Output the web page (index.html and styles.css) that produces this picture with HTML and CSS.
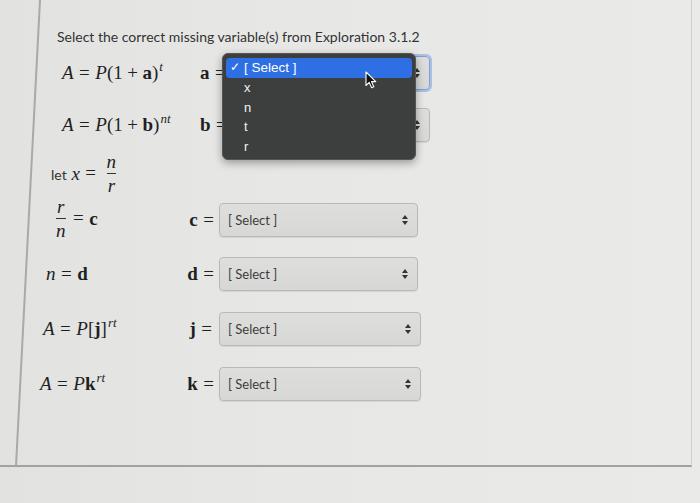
FILE: index.html
```html
<!DOCTYPE html>
<html>
<head>
<meta charset="utf-8">
<link rel="stylesheet" href="styles.css">
</head>
<body>
<div class="panel">
  <h1 class="title">Select the correct missing variable(s) from Exploration 3.1.2</h1>
  <div class="rows">
    <div class="row top r1">
      <span class="math"><i>A</i><span class="rel">=</span><i>P</i>(1<span class="bin">+</span><b>a</b>)<sup><i>t</i></sup></span>
      <span class="label"><b>a</b><span class="rel">=</span></span>
      <div class="select focus covered">
        <span class="sel-text">[ Select ]</span>
        <svg class="arrows" width="6" height="10" viewBox="0 0 6 10"><path d="M3 0L6 4H0Z M3 10L0 6H6Z" fill="#333"/></svg>
        <div class="popup">
          <div class="opt active"><span class="chk">✓</span>[ Select ]</div>
          <div class="opt"><span class="chk"></span>x</div>
          <div class="opt"><span class="chk"></span>n</div>
          <div class="opt"><span class="chk"></span>t</div>
          <div class="opt"><span class="chk"></span>r</div>
          <svg class="cursor" width="12" height="18" viewBox="0 0 12 18"><path d="M1 1L1 14.5L4.2 11.4L6.6 16.8L8.8 15.8L6.5 10.6L10.8 10.6Z" fill="#111" stroke="#fff" stroke-width="1.1" stroke-linejoin="round"/></svg>
        </div>
      </div>
    </div>
    <div class="row top r2">
      <span class="math"><i>A</i><span class="rel">=</span><i>P</i>(1<span class="bin">+</span><b>b</b>)<sup><i>nt</i></sup></span>
      <span class="label"><b>b</b><span class="rel">=</span></span>
      <div class="select covered">
        <span class="sel-text">[ Select ]</span>
        <svg class="arrows" width="6" height="10" viewBox="0 0 6 10"><path d="M3 0L6 4H0Z M3 10L0 6H6Z" fill="#333"/></svg>
      </div>
    </div>
    <div class="row std r3">
      <span class="math"><span class="txt">let</span> <i>x</i><span class="rel">=</span><span class="frac"><span class="num"><i>n</i></span><span class="den"><i>r</i></span></span></span>
    </div>
    <div class="row std r4">
      <span class="math"><span class="frac"><span class="num"><i>r</i></span><span class="den"><i>n</i></span></span><span class="rel">=</span><b>c</b></span>
      <span class="label"><b>c</b><span class="rel">=</span></span>
      <div class="select">
        <span class="sel-text">[ Select ]</span>
        <svg class="arrows" width="6" height="10" viewBox="0 0 6 10"><path d="M3 0L6 4H0Z M3 10L0 6H6Z" fill="#333"/></svg>
      </div>
    </div>
    <div class="row std r5">
      <span class="math"><i>n</i><span class="rel">=</span><b>d</b></span>
      <span class="label"><b>d</b><span class="rel">=</span></span>
      <div class="select">
        <span class="sel-text">[ Select ]</span>
        <svg class="arrows" width="6" height="10" viewBox="0 0 6 10"><path d="M3 0L6 4H0Z M3 10L0 6H6Z" fill="#333"/></svg>
      </div>
    </div>
    <div class="row std r6">
      <span class="math"><i>A</i><span class="rel">=</span><i>P</i>[<b>j</b>]<sup><i>rt</i></sup></span>
      <span class="label"><b>j</b><span class="rel">=</span></span>
      <div class="select">
        <span class="sel-text">[ Select ]</span>
        <svg class="arrows" width="6" height="10" viewBox="0 0 6 10"><path d="M3 0L6 4H0Z M3 10L0 6H6Z" fill="#333"/></svg>
      </div>
    </div>
    <div class="row std r7">
      <span class="math"><i>A</i><span class="rel">=</span><i>P</i><b>k</b><sup><i>rt</i></sup></span>
      <span class="label"><b>k</b><span class="rel">=</span></span>
      <div class="select">
        <span class="sel-text">[ Select ]</span>
        <svg class="arrows" width="6" height="10" viewBox="0 0 6 10"><path d="M3 0L6 4H0Z M3 10L0 6H6Z" fill="#333"/></svg>
      </div>
    </div>
  </div>
</div>
</body>
</html>
```
FILE: styles.css
```css
html, body {
  margin: 0;
  padding: 0;
}
body {
  width: 700px;
  height: 503px;
  overflow: hidden;
  background: linear-gradient(90deg, #e2e3e1 0%, #e7e8e6 40%, #eaebe9 100%);
  font-family: Lato, "Liberation Sans", sans-serif;
  color: #2e2e2e;
}
.panel {
  position: relative;
  width: 692px;
  height: 467px;
  border-bottom: 2px solid #a2a3a1;
  border-right: 1px solid #d0d1cf;
  box-sizing: border-box;
}
.panel::before {
  content: "";
  position: absolute;
  left: 27px;
  top: 0;
  width: 1.5px;
  height: 466px;
  background: #a9aaa8;
  transform: skewX(-2.95deg);
}
.title {
  margin: 0;
  padding: 28px 0 0 57px;
  font-size: 14px;
  line-height: 18px;
  font-weight: 400;
  color: #333;
}
.rows {
  margin-top: 10px;
  display: flex;
  flex-direction: column;
}
.row {
  display: flex;
  align-items: center;
  height: 34px;
  margin-top: 21px;
}
.row.r1 { margin-top: 0; }
.row.r2 { margin-top: 18px; }
.row.r3 { margin-top: 13px; height: 40px; }
.row.r4 { margin-top: 8px; }
.row.r5 { margin-top: 20px; }

.math, .label {
  font-family: "Liberation Serif", "DejaVu Serif", serif;
  font-size: 19px;
  color: #1f1f1f;
  white-space: nowrap;
}
.math i, .label i { font-style: italic; }
.math b, .label b { font-weight: 700; }
.rel { margin: 0 5.5px; }
.bin { margin: 0 4.5px; }
sup {
  font-size: 13px;
  line-height: 0;
  vertical-align: 8px;
  margin-left: 1px;
}
.txt {
  font-family: Lato, "Liberation Sans", sans-serif;
  font-size: 14px;
  color: #333;
}
.frac {
  display: inline-flex;
  flex-direction: column;
  align-items: center;
  vertical-align: middle;
  line-height: 15px;
  padding: 0 2px;
  margin-top: -4px;
}
.frac .num { padding-bottom: 4px; }
.frac .den {
  border-top: 1px solid #333;
  padding-top: 4px;
  align-self: stretch;
  text-align: center;
}
.r3 .frac { margin-left: 3px; }

.top .math {
  box-sizing: border-box;
  width: 200px;
  padding-left: 62px;
}
.top .label { width: 25px; }
.top .select { width: 205px; }

.std .math {
  box-sizing: border-box;
  width: 171px;
}
.r3 .math { padding-left: 51px; }
.r4 .math { padding-left: 54px; }
.r5 .math { padding-left: 46px; }
.r6 .math { padding-left: 43px; }
.r7 .math { padding-left: 40px; }
.std .label {
  box-sizing: border-box;
  width: 48px;
  padding-right: 5px;
  text-align: right;
}
.std .label .rel { margin-right: 0; }
.std .select { width: 199px; }
.r6 .label { padding-right: 7px; }
.r6 .select, .r7 .select { width: 202px; }

.select {
  position: relative;
  box-sizing: border-box;
  height: 34px;
  border: 1px solid #b9bab8;
  border-radius: 4px;
  background: linear-gradient(180deg, #dedfdd 0%, #d7d8d6 100%);
  box-shadow: 0 1px 1px rgba(0,0,0,0.08);
  display: flex;
  align-items: center;
  justify-content: space-between;
  padding: 0 9px 0 8px;
}
.select.focus {
  border-color: #7f9fd6;
  box-shadow: 0 0 0 2px #a9bfe6;
}
.sel-text {
  font-family: Lato, "Liberation Sans", sans-serif;
  font-size: 13px;
  color: #3b3b3b;
}
.covered .sel-text { visibility: hidden; }
.arrows { display: block; }

.popup {
  position: absolute;
  left: -4px;
  top: -4px;
  width: 194px;
  box-sizing: border-box;
  padding: 4px 3px 3px;
  background: #3d3e3e;
  border: 1px solid #555;
  border-radius: 6px;
  box-shadow: 0 3px 8px rgba(0,0,0,0.35);
  font-family: "Liberation Sans", Arial, sans-serif;
  font-size: 13px;
  color: #f2f2f2;
  z-index: 2;
}
.opt {
  height: 19.6px;
  line-height: 19.6px;
  padding-left: 4px;
  border-radius: 4px;
  display: flex;
  align-items: center;
}
.opt.active {
  background: #2f6fe4;
  color: #fff;
  font-size: 13.5px;
  height: 20px;
}
.chk {
  display: inline-block;
  width: 14px;
  font-size: 12px;
}
.cursor {
  position: absolute;
  left: 142px;
  top: 17px;
}
```
